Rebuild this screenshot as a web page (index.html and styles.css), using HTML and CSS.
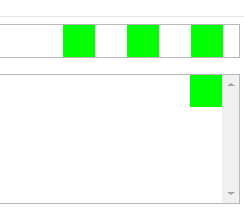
FILE: index.html
```html
<!DOCTYPE html>
<html>
<head>
<meta charset="utf-8">
<link rel="stylesheet" href="styles.css">
</head>
<body>
  <div class="rule"></div>
  <div class="strip">
    <div class="tile"></div>
    <div class="tile"></div>
    <div class="tile"></div>
  </div>
  <div class="panel">
    <div class="panel-body">
      <div class="tile"></div>
    </div>
    <div class="scrollbar">
      <span class="arrow up"></span>
      <span class="arrow down"></span>
    </div>
  </div>
</body>
</html>
```

FILE: styles.css
```css
html, body {
  margin: 0;
  padding: 0;
  background: #ffffff;
}

.rule {
  margin-top: 16px;
  height: 1px;
  background: #e6e6e6;
}

.strip {
  margin: 7px 4px 0 -16px;
  height: 32px;
  border: 1px solid #b8b8b8;
  display: flex;
  justify-content: flex-end;
  gap: 32px;
  padding-right: 16px;
}

.tile {
  width: 32px;
  height: 32px;
  background: #00ff00;
  flex: none;
}

.panel {
  margin: 16px 4px 0 -16px;
  height: 128px;
  border: 1px solid #b8b8b8;
  display: flex;
}

.panel-body {
  flex: 1;
  display: flex;
  justify-content: flex-end;
  align-items: flex-start;
}

.scrollbar {
  width: 17px;
  flex: none;
  background: #f0f0f0;
  display: flex;
  flex-direction: column;
  justify-content: space-between;
  align-items: center;
  padding: 8px 0 8px;
  box-sizing: border-box;
}

.arrow {
  width: 0;
  height: 0;
  border-left: 4px solid transparent;
  border-right: 4px solid transparent;
}

.arrow.up {
  border-bottom: 3px solid #a3a3a3;
}

.arrow.down {
  border-top: 3px solid #a3a3a3;
}
```
